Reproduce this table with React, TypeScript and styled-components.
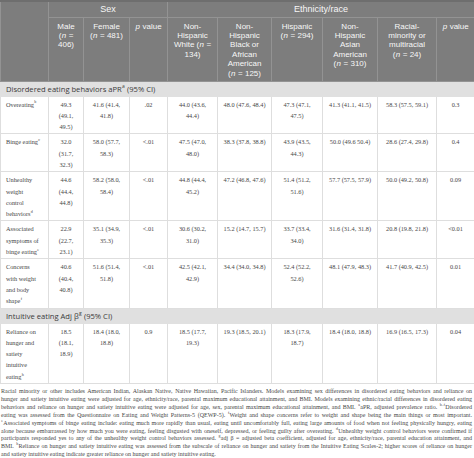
import React from 'react'
import styled, { createGlobalStyle } from 'styled-components'

const GlobalStyle = createGlobalStyle`
  html, body {
    margin: 0;
    padding: 0;
    background: #ffffff;
  }
`

const Page = styled.div`
  width: 474px;
  height: 458px;
  overflow: hidden;
  background: #ffffff;
`

const Table = styled.table`
  width: 474px;
  border-collapse: collapse;
  table-layout: fixed;
  border-top: 2px solid #6e6e6e;
`

const Col = styled.col<{ $w: number }>`
  width: ${({ $w }) => $w}px;
`

const HeadCell = styled.th<{ $h: number }>`
  height: ${({ $h }) => $h}px;
  box-sizing: border-box;
  background: #7d7d7d;
  color: #f7f7f7;
  font-family: 'Liberation Sans', Arial, sans-serif;
  font-size: 8px;
  font-weight: 400;
  line-height: 9.4px;
  text-align: center;
  vertical-align: top;
  white-space: nowrap;
  padding: 4px 2px 0;
  border: 1px solid #939393;
`

const GroupCell = styled(HeadCell)`
  padding: 2px 2px 0;
  font-size: 9px;
  line-height: 11px;
`

const Em = styled.i`
  margin: 0 0.3px;
`

const SectionCell = styled.td`
  height: 15px;
  box-sizing: border-box;
  background: #e0e0e0;
  color: #3a3a3a;
  font-family: 'Open Sans', 'DejaVu Sans', sans-serif;
  font-size: 7.6px;
  padding: 0 5px;
  vertical-align: middle;
  border: 1px solid #e0e0e0;
`

const Cell = styled.td<{ $label?: boolean }>`
  font-family: 'Liberation Serif', 'Times New Roman', serif;
  font-size: 6.3px;
  line-height: 11.3px;
  color: #474747;
  padding: 2px 3px 1px ${({ $label }) => ($label ? '5px' : '3px')};
  text-align: ${({ $label }) => ($label ? 'left' : 'center')};
  vertical-align: top;
  white-space: pre-line;
  border: 1px solid #dedede;
`

const Sup = styled.sup`
  font-size: 0.65em;
  line-height: 0;
  vertical-align: super;
  margin: 0 0.3px;
`

const Notes = styled.div`
  padding: 4px 2px 0 1px;
  font-family: 'Liberation Serif', 'Times New Roman', serif;
  font-size: 6px;
  line-height: 7.9px;
  color: #474747;
`

const NoteLine = styled.div<{ $last?: boolean }>`
  text-align: justify;
  text-align-last: ${({ $last }) => ($last ? 'left' : 'justify')};
`

const widths = [48, 35, 46, 38, 50, 54, 51, 55, 59, 38]

type Row = { label: string[]; mark: string; values: string[] }

const disordered: Row[] = [
  {
    label: ['Overeating'],
    mark: 'b',
    values: ['49.3\n(49.1,\n49.5)', '41.6 (41.4,\n41.8)', '.02', '44.0 (43.6,\n44.4)', '48.0 (47.6, 48.4)', '47.3 (47.1,\n47.5)', '41.3 (41.1, 41.5)', '58.3 (57.5, 59.1)', '0.3'],
  },
  {
    label: ['Binge eating'],
    mark: 'c',
    values: ['32.0\n(31.7,\n32.3)', '58.0 (57.7,\n58.3)', '<.01', '47.5 (47.0,\n48.0)', '38.3 (37.8, 38.8)', '43.9 (43.5,\n44.3)', '50.0 (49.6 50.4)', '28.6 (27.4, 29.8)', '0.4'],
  },
  {
    label: ['Unhealthy', 'weight', 'control', 'behaviors'],
    mark: 'd',
    values: ['44.6\n(44.4,\n44.8)', '58.2 (58.0,\n58.4)', '<.01', '44.8 (44.4,\n45.2)', '47.2 (46.8, 47.6)', '51.4 (51.2,\n51.6)', '57.7 (57.5, 57.9)', '50.0 (49.2, 50.8)', '0.09'],
  },
  {
    label: ['Associated', 'symptoms of', 'binge eating'],
    mark: 'e',
    values: ['22.9\n(22.7,\n23.1)', '35.1 (34.9,\n35.3)', '<.01', '30.6 (30.2,\n31.0)', '15.2 (14.7, 15.7)', '33.7 (33.4,\n34.0)', '31.6 (31.4, 31.8)', '20.8 (19.8, 21.8)', '<0.01'],
  },
  {
    label: ['Concerns', 'with weight', 'and body', 'shape'],
    mark: 'f',
    values: ['40.6\n(40.4,\n40.8)', '51.6 (51.4,\n51.8)', '<.01', '42.5 (42.1,\n42.9)', '34.4 (34.0, 34.8)', '52.4 (52.2,\n52.6)', '48.1 (47.9, 48.3)', '41.7 (40.9, 42.5)', '0.01'],
  },
]

const intuitive: Row[] = [
  {
    label: ['Reliance on', 'hunger and', 'satiety', 'intuitive', 'eating'],
    mark: 'h',
    values: ['18.5\n(18.1,\n18.9)', '18.4 (18.0,\n18.8)', '0.9', '18.5 (17.7,\n19.3)', '19.3 (18.5, 20.1)', '18.3 (17.9,\n18.7)', '18.4 (18.0, 18.8)', '16.9 (16.5, 17.3)', '0.04'],
  },
]

function DataRow({ row }: { row: Row }) {
  return (
    <tr>
      <Cell $label>
        {row.label.map((line, i) => (
          <React.Fragment key={i}>
            {i > 0 && <br />}
            {line}
          </React.Fragment>
        ))}
        <Sup>{row.mark}</Sup>
      </Cell>
      {row.values.map((v, i) => (
        <Cell key={i}>{v}</Cell>
      ))}
    </tr>
  )
}

export default function App() {
  return (
    <Page>
      <GlobalStyle />
      <Table>
        <colgroup>
          {widths.map((w, i) => (
            <Col key={i} $w={w} />
          ))}
        </colgroup>
        <thead>
          <tr>
            <GroupCell $h={16} rowSpan={2} />
            <GroupCell $h={16} colSpan={3}>Sex</GroupCell>
            <GroupCell $h={16} colSpan={6}>Ethnicity/race</GroupCell>
          </tr>
          <tr>
            <HeadCell $h={64}>
              Male
              <br />(<Em>n</Em> =
              <br />
              406)
            </HeadCell>
            <HeadCell $h={64}>
              Female
              <br />(<Em>n</Em> = 481)
            </HeadCell>
            <HeadCell $h={64}>
              <Em>p</Em> value
            </HeadCell>
            <HeadCell $h={64}>
              Non-
              <br />
              Hispanic
              <br />
              White (<Em>n</Em> =
              <br />
              134)
            </HeadCell>
            <HeadCell $h={64}>
              Non-
              <br />
              Hispanic
              <br />
              Black or
              <br />
              African
              <br />
              American
              <br />(<Em>n</Em> = 125)
            </HeadCell>
            <HeadCell $h={64}>
              Hispanic
              <br />(<Em>n</Em> = 294)
            </HeadCell>
            <HeadCell $h={64}>
              Non-
              <br />
              Hispanic
              <br />
              Asian
              <br />
              American
              <br />(<Em>n</Em> = 310)
            </HeadCell>
            <HeadCell $h={64}>
              Racial-
              <br />
              minority or
              <br />
              multiracial
              <br />(<Em>n</Em> = 24)
            </HeadCell>
            <HeadCell $h={64}>
              <Em>p</Em> value
            </HeadCell>
          </tr>
        </thead>
        <tbody>
          <tr>
            <SectionCell colSpan={10}>
              Disordered eating behaviors aPR<Sup>a</Sup> (95% CI)
            </SectionCell>
          </tr>
          {disordered.map((r) => (
            <DataRow key={r.label.join(' ')} row={r} />
          ))}
          <tr>
            <SectionCell colSpan={10}>
              Intuitive eating Adj β<Sup>g</Sup> (95% CI)
            </SectionCell>
          </tr>
          {intuitive.map((r) => (
            <DataRow key={r.label.join(' ')} row={r} />
          ))}
        </tbody>
      </Table>
      <Notes>
        <NoteLine>
          Racial minority or other includes American Indian, Alaskan Native, Native Hawaiian, Pacific Islanders. Models
          examining sex differences in disordered eating behaviors and reliance on
        </NoteLine>
        <NoteLine>
          hunger and satiety intuitive eating were adjusted for age, ethnicity/race, parental maximum educational
          attainment, and BMI. Models examining ethnic/racial differences in disordered eating
        </NoteLine>
        <NoteLine>
          behaviors and reliance on hunger and satiety intuitive eating were adjusted for age, sex, parental maximum
          educational attainment, and BMI. <Sup>a</Sup>aPR, adjusted prevalence ratio. <Sup>b–f</Sup>Disordered
        </NoteLine>
        <NoteLine>
          eating was assessed from the Questionnaire on Eating and Weight Patterns-5 (QEWP-5). <Sup>f</Sup>Weight and
          shape concerns refer to weight and shape being the main things or most important.
        </NoteLine>
        <NoteLine>
          <Sup>e</Sup>Associated symptoms of binge eating include: eating much more rapidly than usual, eating until
          uncomfortably full, eating large amounts of food when not feeling physically hungry, eating
        </NoteLine>
        <NoteLine>
          alone because embarrassed by how much you were eating, feeling disgusted with oneself, depressed, or feeling
          guilty after overeating. <Sup>d</Sup>Unhealthy weight control behaviors were confirmed if
        </NoteLine>
        <NoteLine>
          participants responded yes to any of the unhealthy weight control behaviors assessed. <Sup>g</Sup>adj β =
          adjusted beta coefficient, adjusted for age, ethnicity/race, parental education attainment, and
        </NoteLine>
        <NoteLine>
          BMI. <Sup>h</Sup>Reliance on hunger and satiety intuitive eating was assessed from the subscale of reliance on
          hunger and satiety from the Intuitive Eating Scales-2; higher scores of reliance on hunger
        </NoteLine>
        <NoteLine $last>
          and satiety intuitive eating indicate greater reliance on hunger and satiety intuitive eating.
        </NoteLine>
      </Notes>
    </Page>
  )
}
